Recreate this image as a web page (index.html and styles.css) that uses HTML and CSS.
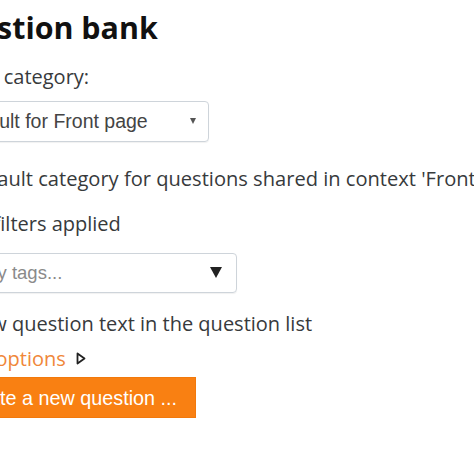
FILE: index.html
```html
<!DOCTYPE html>
<html>
<head>
<meta charset="utf-8">
<link rel="stylesheet" href="styles.css">
</head>
<body>
<div class="page">
  <h2 class="title">Question bank</h2>
  <div class="label">Select a category:</div>
  <div class="select select-cat">
    <span class="select-text">Default for Front page</span>
    <span class="caret-small"></span>
  </div>
  <div class="desc">The default category for questions shared in context 'Front page'.</div>
  <div class="filters">No tag filters applied</div>
  <div class="select select-tags">
    <span class="select-text placeholder">Filter by tags...</span>
    <span class="caret-big"></span>
  </div>
  <div class="check"><span class="checkbox"></span>Show question text in the question list</div>
  <div class="options"><span class="options-link">Search options</span>
    <svg class="opt-icon" width="10" height="13" viewBox="0 0 10 13"><path d="M1.5 1.5 L8.5 6.5 L1.5 11.5 Z" fill="none" stroke="#222" stroke-width="1.8" stroke-linejoin="round"/></svg>
  </div>
  <div class="btn">Create a new question ...</div>
</div>
</body>
</html>
```
FILE: styles.css
```css
html, body {
  margin: 0;
  padding: 0;
  background: #fff;
  overflow: hidden;
}
.page {
  margin-left: -73px;
  font-family: "Open Sans", sans-serif;
  font-size: 20px;
  color: #373a3c;
}
.title {
  margin: 10px 0 0 8px;
  font-size: 30.4px;
  font-weight: 700;
  line-height: 36px;
  height: 36px;
  color: #111;
}
.label {
  margin-top: 19px;
  line-height: 24px;
}
.select {
  box-sizing: border-box;
  height: 41px;
  border: 1px solid #ced4da;
  border-radius: 4px;
  display: flex;
  align-items: center;
  justify-content: space-between;
  font-family: "Liberation Sans", Arial, sans-serif;
  line-height: 22px;
  color: #444;
  box-shadow: 0 1px 1px rgba(0,0,0,0.06);
}
.select-cat {
  margin-top: 11.8px;
  width: 282px;
  padding: 0 12px 0 30px;
  font-size: 19.5px;
}
.caret-small {
  width: 0;
  height: 0;
  border-left: 3.5px solid transparent;
  border-right: 3.5px solid transparent;
  border-top: 6px solid #555;
}
.desc {
  margin-top: 25.2px;
  line-height: 24px;
  white-space: nowrap;
  font-size: 20.1px;
}
.filters {
  margin-top: 21px;
  line-height: 24px;
}
.select-tags {
  margin-top: 16.6px;
  width: 310px;
  height: 40px;
  padding: 0 14px 0 13px;
  font-size: 18.5px;
}
.placeholder {
  color: #8a8a8a;
}
.caret-big {
  width: 0;
  height: 0;
  border-left: 6.5px solid transparent;
  border-right: 6.5px solid transparent;
  border-top: 11px solid #222;
}
.check {
  margin-top: 19.2px;
  line-height: 24px;
  white-space: nowrap;
  display: flex;
  align-items: center;
}
.checkbox {
  box-sizing: border-box;
  width: 13px;
  height: 13px;
  border: 1px solid #767676;
  border-radius: 2px;
  margin: 0 12px 0 4px;
}
.options {
  margin-top: 11px;
  line-height: 24px;
  display: flex;
  align-items: center;
  gap: 10px;
}
.options-link {
  color: #f0873a;
}
.btn {
  margin-top: 6.6px;
  margin-left: 13px;
  box-sizing: border-box;
  width: 256px;
  height: 41px;
  background: #f98012;
  color: #fff;
  font-family: "Liberation Sans", Arial, sans-serif;
  font-size: 19.8px;
  line-height: 40px;
  padding-left: 16.2px;
  border: 1px solid #f2790c;
}
```
